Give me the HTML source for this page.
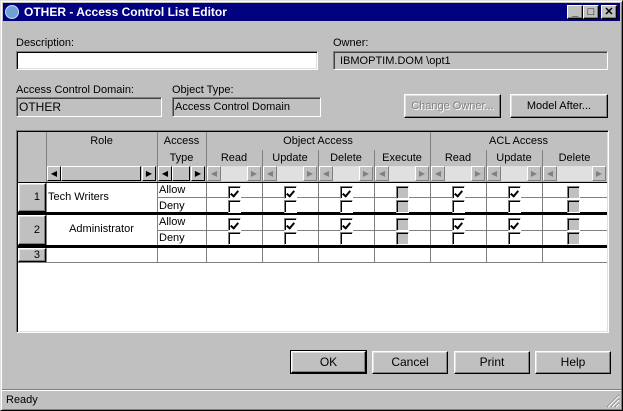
<!DOCTYPE html>
<html><head><meta charset="utf-8"><style>
*{margin:0;padding:0;box-sizing:border-box}
body{width:623px;height:411px;background:#c0c0c0;font-family:"Liberation Sans",sans-serif;font-size:11px;color:#000;position:relative;overflow:hidden}
.a{position:absolute}
.win{left:0;top:0;width:623px;height:411px;border:1px solid;border-color:#dfdfdf #000 #000 #dfdfdf;box-shadow:inset 1px 1px #fff,inset -1px -1px #808080}
.title{left:3px;top:3px;width:617px;height:18px;background:#000080;color:#fff;font-weight:bold;font-size:12px;line-height:18px;padding-left:21px}
.tb{top:5px;width:16px;height:14px;background:#c0c0c0;border:1px solid;border-color:#fff #000 #000 #fff;box-shadow:inset -1px -1px #808080;font-size:11px;font-weight:bold;text-align:center;line-height:12px;color:#000}
.sunk{border:1px solid;border-color:#808080 #fff #fff #808080;box-shadow:inset 1px 1px #000,inset -1px -1px #dfdfdf}
.btn{background:#c0c0c0;border:1px solid;border-color:#fff #000 #000 #fff;box-shadow:inset -1px -1px #808080,inset 1px 1px #dfdfdf;text-align:center;font-size:12px}
.lbl{font-size:11px}
.gl{background:#808080}
.hd{background:#c0c0c0}
.cb{width:13px;height:13px;background:#fff;border:1px solid;border-color:#808080 #fff #fff #808080;box-shadow:inset 1px 1px #000}
.cb.k::after{content:"";position:absolute;left:3px;top:2px;width:3px;height:6px;border:solid #000;border-width:0 2px 2px 0;transform:rotate(40deg)}
.cbd{background:#c0c0c0}
.ar{width:14px;height:15px;background:#c0c0c0;border:1px solid;border-color:#fff #000 #000 #fff;font-size:8px;line-height:13px;text-align:center}
.dis{color:#808080;border-color:#fff #808080 #808080 #fff}
.tr{background:#e0e0e0;height:15px}
</style></head><body>
<div class="a win"></div>
<div class="a title">OTHER - Access Control List Editor</div>
<div class="a" style="left:5px;top:5px;width:14px;height:14px;border-radius:50%;background:#6fa0d8;border:1px solid #cde"></div>
<div class="a tb" style="left:567px">_</div>
<div class="a tb" style="left:583px">□</div>
<div class="a tb" style="left:601px">✕</div>

<div class="a lbl" style="left:16px;top:37px">Description:</div>
<div class="a sunk" style="left:16px;top:51px;width:302px;height:19px;background:#fff"></div>
<div class="a lbl" style="left:333px;top:37px">Owner:</div>
<div class="a sunk" style="left:333px;top:51px;width:275px;height:19px;box-shadow:inset 1px 1px #404040;padding:3px 0 0 6px;font-size:11px">IBMOPTIM.DOM \opt1</div>
<div class="a lbl" style="left:16px;top:84px">Access Control Domain:</div>
<div class="a sunk" style="left:16px;top:97px;width:146px;height:20px;box-shadow:inset 1px 1px #404040;padding:2px 0 0 2px;font-size:12px">OTHER</div>
<div class="a lbl" style="left:172px;top:84px">Object Type:</div>
<div class="a sunk" style="left:172px;top:97px;width:149px;height:20px;box-shadow:inset 1px 1px #404040;padding:3px 0 0 2px">Access Control Domain</div>
<div class="a btn" style="left:404px;top:94px;width:97px;height:24px;line-height:22px;color:#808080;text-shadow:1px 1px #fff;font-size:11px">Change Owner...</div>
<div class="a btn" style="left:510px;top:94px;width:98px;height:24px;line-height:22px;font-size:11px">Model After...</div>

<div class="a sunk" style="left:16px;top:130px;width:593px;height:203px;background:#fff"></div>
<div class="a hd" style="left:18px;top:132px;width:589px;height:50px"></div>
<div class="a hd" style="left:18px;top:182px;width:28px;height:80px"></div>
<div class="a" style="left:46px;top:135px;width:111px;text-align:center">Role</div>
<div class="a" style="left:157px;top:135px;width:49px;text-align:center">Access</div>
<div class="a" style="left:157px;top:152px;width:49px;text-align:center">Type</div>
<div class="a" style="left:206px;top:135px;width:224px;text-align:center">Object Access</div>
<div class="a" style="left:430px;top:135px;width:177px;text-align:center">ACL Access</div>
<div class="a" style="left:206px;top:152px;width:56px;text-align:center">Read</div>
<div class="a" style="left:262px;top:152px;width:56px;text-align:center">Update</div>
<div class="a" style="left:318px;top:152px;width:56px;text-align:center">Delete</div>
<div class="a" style="left:374px;top:152px;width:56px;text-align:center">Execute</div>
<div class="a" style="left:430px;top:152px;width:56px;text-align:center">Read</div>
<div class="a" style="left:486px;top:152px;width:56px;text-align:center">Update</div>
<div class="a" style="left:542px;top:152px;width:65px;text-align:center">Delete</div>
<div class="a gl" style="left:46px;top:132px;width:1px;height:130px"></div>
<div class="a gl" style="left:157px;top:132px;width:1px;height:130px"></div>
<div class="a gl" style="left:206px;top:132px;width:1px;height:130px"></div>
<div class="a gl" style="left:430px;top:132px;width:1px;height:130px"></div>
<div class="a gl" style="left:262px;top:150px;width:1px;height:112px"></div>
<div class="a gl" style="left:318px;top:150px;width:1px;height:112px"></div>
<div class="a gl" style="left:374px;top:150px;width:1px;height:112px"></div>
<div class="a gl" style="left:486px;top:150px;width:1px;height:112px"></div>
<div class="a gl" style="left:542px;top:150px;width:1px;height:112px"></div>
<div class="a ar" style="left:47px;top:166px">◀</div>
<div class="a btn" style="left:61px;top:166px;width:80px;height:15px;box-shadow:none"></div>
<div class="a ar" style="left:142px;top:166px">▶</div>
<div class="a ar" style="left:158px;top:166px">◀</div>
<div class="a btn" style="left:172px;top:166px;width:18px;height:15px;box-shadow:none"></div>
<div class="a ar" style="left:191px;top:166px">▶</div>

<div class="a ar dis" style="left:207px;top:166px">◀</div><div class="a tr" style="left:221px;top:166px;width:26px"></div><div class="a ar dis" style="left:247px;top:166px">▶</div>
<div class="a ar dis" style="left:263px;top:166px">◀</div><div class="a tr" style="left:277px;top:166px;width:26px"></div><div class="a ar dis" style="left:303px;top:166px">▶</div>
<div class="a ar dis" style="left:319px;top:166px">◀</div><div class="a tr" style="left:333px;top:166px;width:26px"></div><div class="a ar dis" style="left:359px;top:166px">▶</div>
<div class="a ar dis" style="left:375px;top:166px">◀</div><div class="a tr" style="left:389px;top:166px;width:26px"></div><div class="a ar dis" style="left:415px;top:166px">▶</div>
<div class="a ar dis" style="left:431px;top:166px">◀</div><div class="a tr" style="left:445px;top:166px;width:26px"></div><div class="a ar dis" style="left:471px;top:166px">▶</div>
<div class="a ar dis" style="left:487px;top:166px">◀</div><div class="a tr" style="left:501px;top:166px;width:26px"></div><div class="a ar dis" style="left:527px;top:166px">▶</div>
<div class="a ar dis" style="left:543px;top:166px">◀</div><div class="a tr" style="left:557px;top:166px;width:35px"></div><div class="a ar dis" style="left:592px;top:166px">▶</div>

<div class="a gl" style="left:18px;top:182px;width:589px;height:1px;background:#000"></div>
<div class="a gl" style="left:157px;top:197px;width:450px;height:1px"></div>
<div class="a" style="left:18px;top:212px;width:589px;height:3px;background:#000"></div>
<div class="a gl" style="left:157px;top:230px;width:450px;height:1px"></div>
<div class="a" style="left:18px;top:245px;width:589px;height:3px;background:#000"></div>
<div class="a gl" style="left:18px;top:262px;width:589px;height:1px"></div>
<div class="a btn" style="left:18px;top:183px;width:28px;height:29px;text-align:right;padding:7px 5px 0 0;font-size:11px">1</div>
<div class="a btn" style="left:18px;top:215px;width:28px;height:30px;text-align:right;padding:8px 5px 0 0;font-size:11px">2</div>
<div class="a btn" style="left:18px;top:248px;width:28px;height:14px;text-align:right;padding:0 5px 0 0;font-size:11px;line-height:12px">3</div>
<div class="a" style="left:48px;top:191px">Tech Writers</div>
<div class="a" style="left:46px;top:223px;width:111px;text-align:center">Administrator</div>
<div class="a" style="left:159px;top:184px">Allow</div>
<div class="a" style="left:159px;top:200px">Deny</div>
<div class="a" style="left:159px;top:216px">Allow</div>
<div class="a" style="left:159px;top:232px">Deny</div>

<div class="a cb k" style="left:228px;top:186px"></div>
<div class="a cb k" style="left:284px;top:186px"></div>
<div class="a cb k" style="left:340px;top:186px"></div>
<div class="a cb cbd" style="left:396px;top:186px"></div>
<div class="a cb k" style="left:452px;top:186px"></div>
<div class="a cb k" style="left:508px;top:186px"></div>
<div class="a cb cbd" style="left:567px;top:186px"></div>
<div class="a cb" style="left:228px;top:200px"></div>
<div class="a cb" style="left:284px;top:200px"></div>
<div class="a cb" style="left:340px;top:200px"></div>
<div class="a cb cbd" style="left:396px;top:200px"></div>
<div class="a cb" style="left:452px;top:200px"></div>
<div class="a cb" style="left:508px;top:200px"></div>
<div class="a cb cbd" style="left:567px;top:200px"></div>
<div class="a cb k" style="left:228px;top:218px"></div>
<div class="a cb k" style="left:284px;top:218px"></div>
<div class="a cb k" style="left:340px;top:218px"></div>
<div class="a cb cbd" style="left:396px;top:218px"></div>
<div class="a cb k" style="left:452px;top:218px"></div>
<div class="a cb k" style="left:508px;top:218px"></div>
<div class="a cb cbd" style="left:567px;top:218px"></div>
<div class="a cb" style="left:228px;top:232px"></div>
<div class="a cb" style="left:284px;top:232px"></div>
<div class="a cb" style="left:340px;top:232px"></div>
<div class="a cb cbd" style="left:396px;top:232px"></div>
<div class="a cb" style="left:452px;top:232px"></div>
<div class="a cb" style="left:508px;top:232px"></div>
<div class="a cb cbd" style="left:567px;top:232px"></div>

<div class="a" style="left:290px;top:350px;width:77px;height:24px;border:1px solid #000"></div>
<div class="a btn" style="left:291px;top:351px;width:75px;height:22px;line-height:20px">OK</div>
<div class="a btn" style="left:372px;top:351px;width:76px;height:23px;line-height:21px">Cancel</div>
<div class="a btn" style="left:454px;top:351px;width:76px;height:23px;line-height:21px">Print</div>
<div class="a btn" style="left:535px;top:351px;width:76px;height:23px;line-height:21px">Help</div>

<div class="a" style="left:2px;top:389px;width:619px;height:1px;background:#808080"></div>
<div class="a" style="left:2px;top:390px;width:619px;height:1px;background:#fff"></div>
<div class="a" style="left:6px;top:394px;font-size:11px">Ready</div>
<svg class="a" style="left:606px;top:394px" width="14" height="14"><path d="M13 1L1 13M13 5L5 13M13 9L9 13" stroke="#808080" stroke-width="1.2"/><path d="M13 2L2 13M13 6L6 13M13 10L10 13" stroke="#fff" stroke-width="1"/></svg>
</body></html>
